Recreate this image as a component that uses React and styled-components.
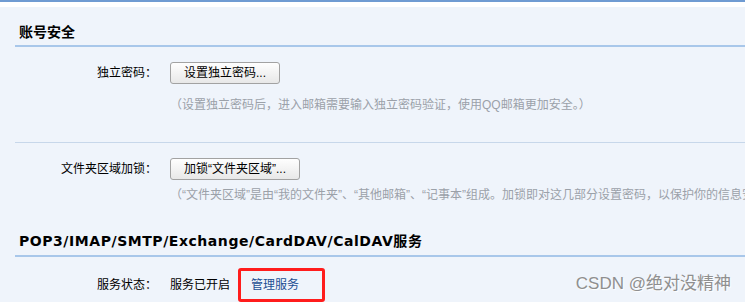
import React from "react";
import styled, { createGlobalStyle } from "styled-components";

const Global = createGlobalStyle`
  html, body { margin: 0; padding: 0; }
  body {
    width: 745px;
    height: 302px;
    overflow: hidden;
    background: #eff4fb;
    font-family: "Liberation Sans", "Noto Sans CJK SC", sans-serif;
    font-size: 12px;
    color: #000;
  }
`;

const Frame = styled.div`
  position: relative;
  width: 745px;
  height: 302px;
  overflow: hidden;
  background: #eff4fb;
`;

const TopBar = styled.div`
  height: 5px;
  background: #ffffff;
  border-top: 2px solid #6f9bd2;
`;

const Page = styled.div`
  padding: 14px 0 0 15px;
  white-space: nowrap;
`;

const SectionTitle = styled.div`
  font-family: ${(p) =>
    p.$latin ? `"DejaVu Sans", "Noto Sans CJK SC", sans-serif` : `"Noto Sans CJK SC", sans-serif`};
  font-weight: bold;
  font-size: 14px;
  letter-spacing: ${(p) => (p.$latin ? "0.55px" : "0")};
  line-height: 20px;
  padding: 0 0 4px 4px;
  margin-top: ${(p) => p.$mt || 0}px;
  border-bottom: 2px solid #a8c7ea;
  color: #000;
`;

const Row = styled.div`
  display: flex;
  align-items: center;
  margin-top: ${(p) => p.$mt || 0}px;
  min-height: 22px;
`;

const Label = styled.div`
  width: 142px;
  text-align: right;
  line-height: 22px;
  margin-right: 13px;
  flex: none;
`;

const Button = styled.button`
  height: 22px;
  padding: 0 13px;
  font-family: "Liberation Sans", "Noto Sans CJK SC", sans-serif;
  font-size: 12px;
  color: #000;
  border: 1px solid #a2a2a2;
  border-radius: 3px;
  background: linear-gradient(#fefefe, #e8e8e8);
  line-height: 20px;
  cursor: pointer;
`;

const Hint = styled.div`
  padding-left: 155px;
  margin-top: ${(p) => p.$mt || 0}px;
  line-height: 18px;
  color: #9ba1a9;
`;

const Divider = styled.div`
  height: 1px;
  background: #c7d7ea;
  margin-top: ${(p) => p.$mt || 0}px;
`;

const Status = styled.span`
  line-height: 22px;
`;

const Highlight = styled.span`
  display: inline-flex;
  align-items: center;
  height: 28px;
  margin-left: 8px;
  padding: 0 23px 0 10px;
  border: 3px solid #ff1c1c;
  border-radius: 3px;
`;

const Link = styled.a`
  color: #1d4f93;
  text-decoration: none;
  line-height: 22px;
`;

const Watermark = styled.div`
  position: absolute;
  right: 14px;
  bottom: 8px;
  font-family: "Liberation Sans", "Noto Sans CJK SC", sans-serif;
  font-size: 17px;
  color: #8f8f8f;
  text-shadow: 1px 1px 1px #ffffff;
  white-space: nowrap;
`;

export default function App() {
  return (
    <Frame>
      <Global />
      <TopBar />
      <Page>
        <SectionTitle>账号安全</SectionTitle>
        <Row $mt={15}>
          <Label>独立密码：</Label>
          <Button>设置独立密码...</Button>
        </Row>
        <Hint $mt={12}>（设置独立密码后，进入邮箱需要输入独立密码验证，使用QQ邮箱更加安全。）</Hint>
        <Divider $mt={28} />
        <Row $mt={15}>
          <Label>文件夹区域加锁：</Label>
          <Button>加锁“文件夹区域”...</Button>
        </Row>
        <Hint $mt={6}>
          （“文件夹区域”是由“我的文件夹”、“其他邮箱”、“记事本”组成。加锁即对这几部分设置密码，以保护你的信息安全。）
        </Hint>
        <SectionTitle $latin $mt={27}>POP3/IMAP/SMTP/Exchange/CardDAV/CalDAV服务</SectionTitle>
        <Row $mt={11}>
          <Label>服务状态：</Label>
          <Status>服务已开启</Status>
          <Highlight>
            <Link href="#">管理服务</Link>
          </Highlight>
        </Row>
      </Page>
      <Watermark>CSDN @绝对没精神</Watermark>
    </Frame>
  );
}
